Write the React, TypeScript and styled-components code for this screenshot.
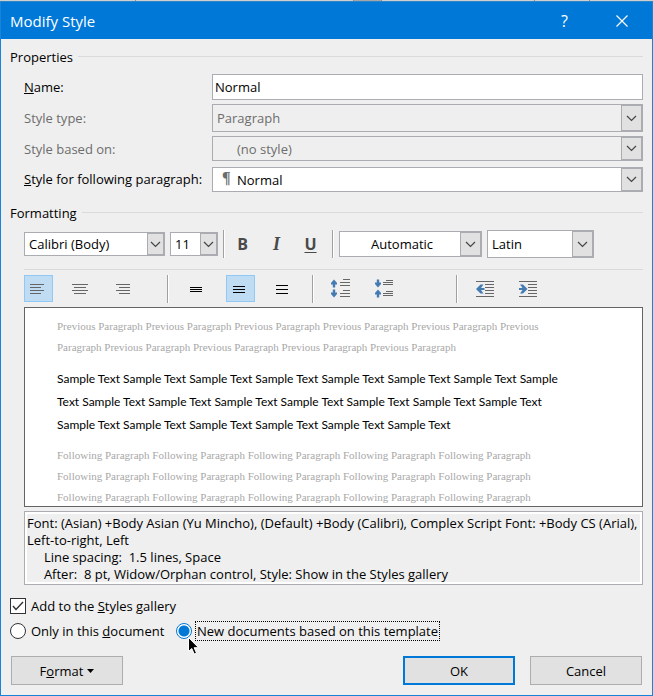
import React from "react";
import styled, { createGlobalStyle, css } from "styled-components";

const GlobalStyle = createGlobalStyle`
  *, *::before, *::after { box-sizing: border-box; }
  body {
    margin: 0;
    background: #efefef;
    color: #000;
    font: 13px/18px "Open Sans", "Noto Sans", sans-serif;
  }
  button, input, select { font: inherit; color: inherit; margin: 0; }
`;

const Backdrop = styled.div`
  display: grid;
  grid-template-columns: 136px 218px 28px 153px 55px 1fr;
  height: 1px;
  background: #cfcfcf;
`;

const BackdropCell = styled.i<{ $dark?: boolean }>`
  border-right: 1px solid #8f8f8f;
  background: ${(p) => (p.$dark ? "#a6a6a6" : "transparent")};
  &:last-child { border-right: 0; }
`;

const Dialog = styled.main`
  border: 1px solid #1883d7;
  border-top-color: #2a86c8;
  background: #efefef;
`;

const TitleBar = styled.header`
  display: flex;
  align-items: center;
  height: 37px;
  padding: 0 2px 0 9px;
  background: #0078d7;
  color: #fff;
`;

const Title = styled.h1`
  flex: 1;
  margin: 0;
  font-size: 15px;
  line-height: 20px;
  font-weight: 400;
`;

const CaptionButton = styled.button`
  display: grid;
  place-items: center;
  width: 57px;
  height: 36px;
  padding: 0;
  border: 0;
  background: none;
  font-size: 16px;
`;

const Body = styled.div`
  padding: 9px 9px 10px;
`;

const SectionHead = styled.h2`
  display: flex;
  align-items: center;
  gap: 5px;
  margin: 0;
  font-size: 13px;
  line-height: 18px;
  font-weight: 400;
  &::after {
    content: "";
    flex: 1;
    height: 1px;
    margin-bottom: 2px;
    background: #dadada;
  }
`;

const Fields = styled.div`
  display: grid;
  grid-template-columns: 188px 1fr;
  align-items: center;
  row-gap: 4px;
  margin: 8px 0 12px;
  padding-left: 14px;
`;

const Label = styled.label<{ $muted?: boolean }>`
  color: ${(p) => (p.$muted ? "#6d6d6d" : "#000")};
`;

const TextBox = styled.input`
  width: 100%;
  height: 26px;
  padding: 0 2px;
  border: 1px solid #abadb3;
  background: #fff;
  outline: 0;
`;

const ComboFrame = styled.div<{ $h: number; $w?: number; $muted?: boolean; $gap?: number }>`
  display: grid;
  grid-template-columns: 1fr auto;
  width: ${(p) => (p.$w ? `${p.$w}px` : "auto")};
  height: ${(p) => p.$h}px;
  margin-top: ${(p) => p.$gap ?? 0}px;
  border: 1px solid #abacb1;
  background: ${(p) => (p.$muted ? "#efefef" : "#fff")};
  color: ${(p) => (p.$muted ? "#6d6d6d" : "#000")};
`;

const ComboSelect = styled.select<{ $indent: number }>`
  grid-area: 1 / 1 / 2 / 3;
  width: 100%;
  min-width: 0;
  padding: 0 0 0 ${(p) => p.$indent}px;
  appearance: none;
  border: 0;
  border-radius: 0;
  background: transparent;
  outline: 0;
  opacity: 1;
  &:disabled { color: #6d6d6d; opacity: 1; }
`;

const Prefix = styled.span`
  grid-area: 1 / 1;
  justify-self: start;
  padding-left: 9px;
  color: #6d6d6d;
  font-family: "Liberation Serif", serif;
  font-weight: 700;
  font-size: 16px;
  line-height: 20px;
  pointer-events: none;
`;

const Arrow = styled.span<{ $w: number }>`
  grid-area: 1 / 2;
  display: grid;
  place-items: center;
  width: ${(p) => p.$w}px;
  border: 1px solid #abacb1;
  background: #e1e1e1;
  pointer-events: none;
`;

const Chevron = () => (
  <svg width="11" height="7" viewBox="0 0 11 7" fill="none" stroke="#444" strokeWidth="1.2" aria-hidden="true">
    <path d="M1 1l4.5 4.5L10 1" />
  </svg>
);

type ComboProps = {
  id?: string;
  label?: string;
  value: string;
  h: number;
  w?: number;
  arrow?: number;
  indent?: number;
  disabled?: boolean;
  prefix?: string;
  gap?: number;
};

const Combo = ({ id, label, value, h, w, arrow = 21, indent = 4, disabled, prefix, gap }: ComboProps) => (
  <ComboFrame $h={h} $w={w} $muted={disabled} $gap={gap}>
    <ComboSelect id={id} aria-label={label} $indent={indent} disabled={disabled} defaultValue={value}>
      <option>{value}</option>
    </ComboSelect>
    {prefix && <Prefix aria-hidden="true">{prefix}</Prefix>}
    <Arrow $w={arrow}><Chevron /></Arrow>
  </ComboFrame>
);

const Toolbar = styled.div<{ $h: number }>`
  display: flex;
  align-items: center;
  height: ${(p) => p.$h}px;
  margin-left: 14px;
`;

const Separator = styled.i<{ $before: number; $after: number }>`
  width: 2px;
  height: 28px;
  margin: 0 ${(p) => p.$after}px 0 ${(p) => p.$before}px;
  border-left: 1px solid #a0a0a0;
  border-right: 1px solid #fff;
`;

const Group = styled.div<{ $gap: number }>`
  display: flex;
  align-items: center;
  gap: ${(p) => p.$gap}px;
`;

const ToolButton = styled.button<{ $on?: boolean }>`
  display: grid;
  place-items: center;
  width: 29px;
  height: 27px;
  padding: 0;
  border: 1px solid ${(p) => (p.$on ? "#90c8f6" : "transparent")};
  background: ${(p) => (p.$on ? "#c0dcf3" : "transparent")};
`;

const letter = {
  bold: css`font-weight: 700;`,
  italic: css`font-family: "Liberation Serif", serif; font-style: italic; font-weight: 700; font-size: 18px;`,
  underline: css`font-weight: 700; text-decoration: underline; text-underline-offset: 2px; text-decoration-thickness: 1px;`,
};

const Letter = styled.span<{ $kind: keyof typeof letter }>`
  color: #4a4a4a;
  font-size: 16px;
  line-height: 20px;
  ${(p) => letter[p.$kind]}
`;

const Rule = styled.hr`
  height: 1px;
  margin: 3px 0 5px 14px;
  border: 0;
  background: #dadada;
`;

type Line = [x: number, y: number, w: number];

const Lines = ({ lines, color = "#666", children }: { lines: Line[]; color?: string; children?: React.ReactNode }) => (
  <svg width="27" height="25" viewBox="0 0 27 25" aria-hidden="true">
    {lines.map(([x, y, w]) => (
      <rect key={`${x}-${y}`} x={x} y={y} width={w} height="1" fill={color} shapeRendering="crispEdges" />
    ))}
    {children}
  </svg>
);

const arrowUp = "m0 4 3-3.5 3 3.5v1.5H4.2V8.5H1.8V5.5H0z";
const arrowDown = "m0 5 3 3.5L6 5V3.5H4.2V.5H1.8v3H0z";

const BlueArrow = ({ d, x, y }: { d: string; x: number; y: number }) => (
  <path d={d} transform={`translate(${x} ${y})`} fill="#447bb3" />
);

const Preview = styled.section`
  height: 200px;
  margin: 5px 0 4px 14px;
  padding: 8px 32px 0;
  border: 1px solid #646464;
  background: #fff;
  overflow: hidden;
  white-space: nowrap;
`;

const Ghost = styled.p`
  margin: 0;
  color: #a8a8a8;
  font: 11px/21px "Liberation Serif", serif;
`;

const Sample = styled.p`
  margin: 9px 0 9px;
  font: 12px/23px Lato, "Open Sans", sans-serif;
`;

const Description = styled.section`
  height: 74px;
  margin-left: 14px;
  padding: 3px 2px 0;
  border: 1px solid #abadb3;
  box-shadow: inset 0 0 0 2px #fff;
  line-height: 17px;
  white-space: pre-wrap;
`;

const Choices = styled.div`
  display: grid;
  grid-template-columns: 166px 1fr;
  gap: 5px 0;
  padding-top: 11px;
`;

const Choice = styled.label<{ $wide?: boolean }>`
  display: flex;
  align-items: center;
  gap: 3px;
  height: 20px;
  grid-column: ${(p) => (p.$wide ? "1 / 3" : "auto")};
`;

const ChoiceText = styled.span<{ $focus?: boolean }>`
  padding: 0 1px;
  border: 1px dotted ${(p) => (p.$focus ? "#000" : "transparent")};
`;

const CheckInput = styled.input`
  appearance: none;
  flex: none;
  width: 16px;
  height: 16px;
  border: 1px solid #333;
  background: #fff;
`;

const CheckBox = styled.span`
  display: grid;
  > * { grid-area: 1 / 1; }
  > svg { pointer-events: none; }
`;

const RadioInput = styled.input`
  appearance: none;
  flex: none;
  width: 16px;
  height: 16px;
  border: 1px solid #333;
  border-radius: 50%;
  background: #fff;
  &:checked {
    border-color: #0078d7;
    background: radial-gradient(circle, #0078d7 5px, #fff 6px);
  }
`;

const RadioBox = styled.span`
  position: relative;
  display: grid;
`;

const Pointer = styled.svg`
  position: absolute;
  left: 12px;
  top: 14px;
  pointer-events: none;
`;

const Footer = styled.footer`
  display: flex;
  align-items: center;
  gap: 15px;
  padding: 15px 1px 0;
`;

const PushButton = styled.button<{ $primary?: boolean }>`
  display: flex;
  align-items: center;
  justify-content: center;
  gap: 4px;
  width: 112px;
  height: 29px;
  padding: 0;
  border: ${(p) => (p.$primary ? "2px solid #0078d7" : "1px solid #adadad")};
  background: #e1e1e1;
  &:first-child { margin-right: auto; }
`;

const times = (text: string, n: number) => Array(n).fill(text).join(" ");
const previous = "Previous Paragraph";
const following = times("Following Paragraph", 5);
const sample = "Sample Text";

export default function App() {
  return (
    <>
      <GlobalStyle />
      <Backdrop>
        <BackdropCell /><BackdropCell /><BackdropCell $dark /><BackdropCell /><BackdropCell /><BackdropCell />
      </Backdrop>
      <Dialog>
        <TitleBar>
          <Title>Modify Style</Title>
          <CaptionButton aria-label="Help">?</CaptionButton>
          <CaptionButton aria-label="Close">
            <svg width="12" height="12" viewBox="0 0 12 12" stroke="#fff" strokeWidth="1.2" aria-hidden="true">
              <path d="M.5.5l11 11M11.5.5l-11 11" />
            </svg>
          </CaptionButton>
        </TitleBar>
        <Body>
          <SectionHead>Properties</SectionHead>
          <Fields>
            <Label htmlFor="name"><u>N</u>ame:</Label>
            <TextBox id="name" defaultValue="Normal" />
            <Label htmlFor="type" $muted>Style type:</Label>
            <Combo id="type" value="Paragraph" h={28} disabled />
            <Label htmlFor="base" $muted>Style based on:</Label>
            <Combo id="base" value="(no style)" h={25} indent={24} disabled />
            <Label htmlFor="next"><u>S</u>tyle for following paragraph:</Label>
            <Combo id="next" value="Normal" h={25} indent={24} prefix="¶" gap={2} />
          </Fields>
          <SectionHead>Formatting</SectionHead>
          <Toolbar $h={44}>
            <Group $gap={5}>
              <Combo label="Font" value="Calibri (Body)" h={24} w={141} arrow={17} />
              <Combo label="Font size" value="11" h={24} w={48} arrow={17} />
            </Group>
            <Separator $before={5} $after={3} />
            <Group $gap={5}>
              <ToolButton aria-label="Bold"><Letter $kind="bold">B</Letter></ToolButton>
              <ToolButton aria-label="Italic"><Letter $kind="italic">I</Letter></ToolButton>
              <ToolButton aria-label="Underline"><Letter $kind="underline">U</Letter></ToolButton>
            </Group>
            <Separator $before={7} $after={5} />
            <Group $gap={5}>
              <Combo label="Font color" value="Automatic" h={26} w={143} indent={31} />
              <Combo label="Script" value="Latin" h={28} w={107} />
            </Group>
          </Toolbar>
          <Rule />
          <Toolbar $h={27}>
            <Group $gap={14}>
              <ToolButton $on aria-label="Align left">
                <Lines lines={[[5, 8, 14], [5, 11, 11], [5, 14, 14], [5, 17, 11]]} />
              </ToolButton>
              <ToolButton aria-label="Center">
                <Lines lines={[[4, 8, 16], [6, 11, 12], [4, 14, 16], [6, 17, 12]]} />
              </ToolButton>
              <ToolButton aria-label="Align right">
                <Lines lines={[[5, 8, 14], [8, 11, 11], [5, 14, 14], [8, 17, 11]]} />
              </ToolButton>
            </Group>
            <Separator $before={28} $after={14} />
            <Group $gap={14}>
              <ToolButton aria-label="Single spacing">
                <Lines color="#000" lines={[[6, 11, 12], [6, 13, 12], [6, 15, 12]]} />
              </ToolButton>
              <ToolButton $on aria-label="1.5 spacing">
                <Lines color="#000" lines={[[6, 10, 12], [6, 13, 12], [6, 16, 12]]} />
              </ToolButton>
              <ToolButton aria-label="Double spacing">
                <Lines color="#000" lines={[[6, 9, 12], [6, 13, 12], [6, 17, 12]]} />
              </ToolButton>
            </Group>
            <Separator $before={14} $after={14} />
            <Group $gap={14}>
              <ToolButton aria-label="Increase paragraph spacing">
                <Lines lines={[[14, 3, 7], [11, 6, 10], [11, 9, 10], [14, 14, 7], [11, 17, 10], [11, 20, 10]]}>
                  <BlueArrow d={arrowUp} x={2} y={3} />
                  <BlueArrow d={arrowDown} x={2} y={13} />
                </Lines>
              </ToolButton>
              <ToolButton aria-label="Decrease paragraph spacing">
                <Lines lines={[[14, 4, 7], [11, 6, 10], [11, 8, 10], [14, 15, 7], [11, 17, 10], [11, 19, 10]]}>
                  <BlueArrow d={arrowDown} x={3} y={3} />
                  <BlueArrow d={arrowUp} x={3} y={13} />
                </Lines>
              </ToolButton>
            </Group>
            <Separator $before={56} $after={14} />
            <Group $gap={14}>
              <ToolButton aria-label="Decrease indent">
                <Lines lines={[[3, 5, 18], [12, 8, 9], [12, 11, 9], [12, 14, 9], [12, 17, 9], [3, 20, 18]]}>
                  <path d="M3 13l4.500-4.500h3L8 12h3.500v2H8l2.500 3.500h-3z" fill="#447bb3" />
                </Lines>
              </ToolButton>
              <ToolButton aria-label="Increase indent">
                <Lines lines={[[3, 5, 18], [12, 8, 9], [12, 11, 9], [12, 14, 9], [12, 17, 9], [3, 20, 18]]}>
                  <path d="M11.500 13L7 8.500H4L6.500 12H3v2h3.500L4 17.500h3z" fill="#447bb3" />
                </Lines>
              </ToolButton>
            </Group>
          </Toolbar>
          <Preview aria-label="Preview">
            <Ghost>{times(previous, 5)} Previous<br />Paragraph {times(previous, 4)}</Ghost>
            <Sample>
              {times(sample, 7)} Sample<br />
              Text {times(sample, 7)}<br />
              {times(sample, 6)}
            </Sample>
            <Ghost>{following}<br />{following}<br />{following}</Ghost>
          </Preview>
          <Description>
            {"Font: (Asian) +Body Asian (Yu Mincho), (Default) +Body (Calibri), Complex Script Font: +Body CS (Arial),\nLeft-to-right, Left\n     Line spacing:  1.5 lines, Space\n     After:  8 pt, Widow/Orphan control, Style: Show in the Styles gallery"}
          </Description>
          <Choices>
            <Choice $wide>
              <CheckBox>
                <CheckInput type="checkbox" defaultChecked />
                <svg width="16" height="16" viewBox="0 0 16 16" fill="none" stroke="#333" strokeWidth="1.400" aria-hidden="true">
                  <path d="M3 8l3 3.500L13 4" />
                </svg>
              </CheckBox>
              <ChoiceText>Add to the <u>S</u>tyles gallery</ChoiceText>
            </Choice>
            <Choice>
              <RadioInput type="radio" name="scope" />
              <ChoiceText>Only in this <u>d</u>ocument</ChoiceText>
            </Choice>
            <Choice>
              <RadioBox>
                <RadioInput type="radio" name="scope" defaultChecked />
                <Pointer width="11" height="18" viewBox="0 0 11 18" aria-hidden="true">
                  <path d="M.5.5v14l3.300-3 2.400 5.500 2.300-1-2.400-5.300h4.400z" fill="#000" stroke="#fff" />
                </Pointer>
              </RadioBox>
              <ChoiceText $focus>New documents based on this template</ChoiceText>
            </Choice>
          </Choices>
          <Footer>
            <PushButton>
              <span>F<u>o</u>rmat</span>
              <svg width="7" height="4" viewBox="0 0 7 4" aria-hidden="true"><path d="M0 0h7L3.500 4z" /></svg>
            </PushButton>
            <PushButton $primary>OK</PushButton>
            <PushButton>Cancel</PushButton>
          </Footer>
        </Body>
      </Dialog>
    </>
  );
}
